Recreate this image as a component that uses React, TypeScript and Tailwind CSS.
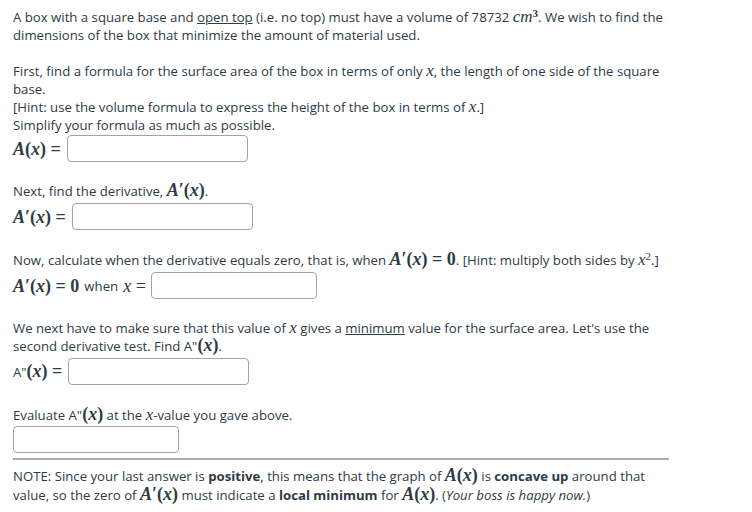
const serif = "font-['Liberation_Serif','Times_New_Roman',serif]"

function X() {
  return <span className={`${serif} italic text-[17px] leading-[0px]`}>x</span>
}

function I({ children }: { children: React.ReactNode }) {
  return <span className="italic">{children}</span>
}

function Eq({ children, row = false }: { children: React.ReactNode; row?: boolean }) {
  return (
    <span className={`${serif} font-bold text-[18px] whitespace-nowrap ${row ? 'leading-[20px]' : 'leading-[0px]'}`}>
      {children}
    </span>
  )
}

function Box({ w }: { w: number }) {
  return (
    <div
      className={`${w === 181 ? 'w-[181px]' : 'w-[166px]'} h-[27px] border border-[#a3a3a3] rounded-[4px] bg-white shrink-0`}
    />
  )
}

export default function App() {
  return (
    <div className="w-[752px] h-[512px] bg-white overflow-hidden font-['Open_Sans',sans-serif] text-[13.2px] leading-[18px] text-[#2d3b45] pl-[13px] pt-[8px]">
      <p>
        A box with a square base and <span className="underline">open top</span> (i.e. no top) must have a volume of 78732{' '}
        <span className={`${serif} italic text-[17px] leading-[0px]`}>
          cm<sup className="font-bold not-italic text-[11px]">3</sup>
        </span>
        . We wish to find the
        <br />
        dimensions of the box that minimize the amount of material used.
      </p>

      <p className="mt-[18px]">
        First, find a formula for the surface area of the box in terms of only <X />, the length of one side of the square
        <br />
        base.
        <br />
        [Hint: use the volume formula to express the height of the box in terms of <X />.]
        <br />
        Simplify your formula as much as possible.
      </p>
      <div className="flex items-center gap-[6px] mt-[1px]">
        <Eq row>
          <I>A</I>(<I>x</I>) =
        </Eq>
        <Box w={181} />
      </div>

      <p className="mt-[20px]">
        Next, find the derivative,{' '}
        <Eq>
          <I>A</I>&prime;(<I>x</I>)
        </Eq>
        .
      </p>
      <div className="flex items-center gap-[6px] mt-[3px]">
        <Eq row>
          <I>A</I>&prime;(<I>x</I>) =
        </Eq>
        <Box w={181} />
      </div>

      <p className="mt-[21px]">
        Now, calculate when the derivative equals zero, that is, when{' '}
        <Eq>
          <I>A</I>&prime;(<I>x</I>) = 0
        </Eq>
        . [Hint: multiply both sides by{' '}
        <span className={`${serif} italic text-[17px] leading-[0px]`}>
          x<sup className="not-italic text-[11px]">2</sup>
        </span>
        .]
      </p>
      <div className="flex items-center gap-[5px] mt-[3px]">
        <Eq row>
          <I>A</I>&prime;(<I>x</I>) = 0
        </Eq>
        <span>when</span>
        <span className={`${serif} text-[18px] leading-[20px] whitespace-nowrap`}>
          <I>x</I> =
        </span>
        <Box w={166} />
      </div>

      <p className="mt-[20px]">
        We next have to make sure that this value of <X /> gives a <span className="underline">minimum</span> value for
        the surface area. Let's use the
        <br />
        second derivative test. Find A"
        <Eq>
          (<I>x</I>)
        </Eq>
        .
      </p>
      <div className="flex items-center gap-[6px] mt-[3px]">
        <span className="whitespace-nowrap">
          A"
          <Eq>
            (<I>x</I>) =
          </Eq>
        </span>
        <Box w={181} />
      </div>

      <p className="mt-[21px]">
        Evaluate A"
        <Eq>
          (<I>x</I>)
        </Eq>{' '}
        at the <X />
        -value you gave above.
      </p>
      <div className="mt-[2px]">
        <Box w={166} />
      </div>

      <div className="w-[656px] h-[2px] bg-[#ababab] mt-[5px]" />

      <p className="mt-[7px] leading-[19px]">
        NOTE: Since your last answer is <b>positive</b>, this means that the graph of{' '}
        <Eq>
          <I>A</I>(<I>x</I>)
        </Eq>{' '}
        is <b>concave up</b> around that
        <br />
        value, so the zero of{' '}
        <Eq>
          <I>A</I>&prime;(<I>x</I>)
        </Eq>{' '}
        must indicate a <b>local minimum</b> for{' '}
        <Eq>
          <I>A</I>(<I>x</I>)
        </Eq>
        . (<i>Your boss is happy now.</i>)
      </p>
    </div>
  )
}
